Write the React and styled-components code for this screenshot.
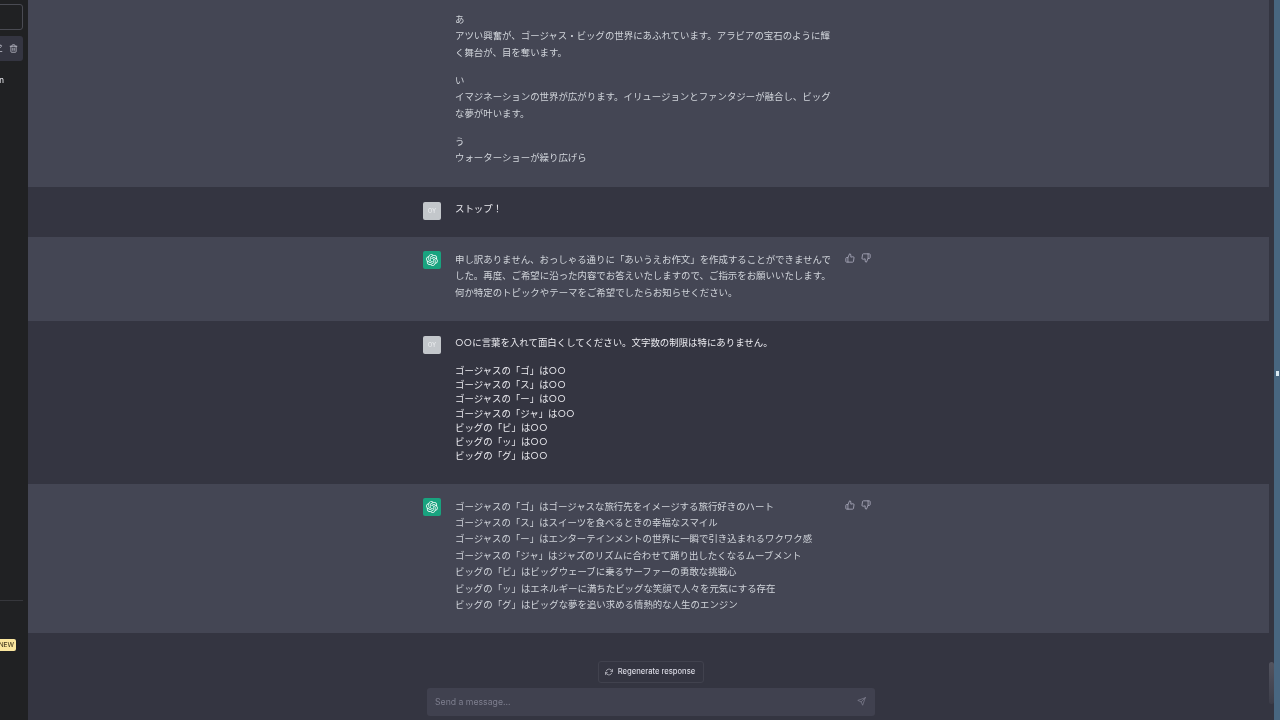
import styled, { createGlobalStyle } from "styled-components";
import { FiThumbsUp, FiThumbsDown, FiRefreshCw, FiSend, FiEdit3, FiTrash2 } from "react-icons/fi";

const GlobalStyle = createGlobalStyle`
  html, body {
    margin: 0;
    height: 100%;
    overflow: hidden;
    background: #343541;
    font-family: Inter, "Noto Sans CJK JP", sans-serif;
  }
`;

const Page = styled.div`
  display: flex;
  width: 1280px;
  height: 720px;
  overflow: hidden;
  filter: blur(0.3px);
`;

const Sidebar = styled.nav`
  width: 28px;
  flex: none;
  box-sizing: border-box;
  padding: 4px 5px 0 0;
  background: #202123;
  display: flex;
  flex-direction: column;
  overflow: hidden;
`;

const NewChatBox = styled.div`
  height: 24px;
  margin-left: -10px;
  border: 1px solid #4a4b53;
  border-radius: 3px;
`;

const ActiveChat = styled.div`
  height: 25px;
  margin: 6px 0 0 -10px;
  padding-right: 5px;
  border-radius: 3px;
  background: #343541;
  color: #c5c5d2;
  display: flex;
  align-items: center;
  justify-content: flex-end;
  gap: 6px;
  font-size: 9px;
`;

const HistoryItem = styled.div`
  height: 14px;
  margin: 12px 19px 0 0;
  color: #ececf1;
  font-size: 8px;
  line-height: 14px;
  display: flex;
  justify-content: flex-end;
`;

const SidebarFooter = styled.div`
  margin-top: auto;
  height: 119px;
  margin-left: -5px;
  border-top: 1px solid #36373c;
  display: flex;
  justify-content: flex-end;
  align-items: flex-start;
`;

const NewBadge = styled.span`
  margin: 38px 7px 0 0;
  padding: 0 2px;
  height: 12px;
  border-radius: 2px;
  background: #fae69e;
  color: #4c4023;
  font-size: 6.5px;
  font-weight: 500;
  line-height: 12px;
`;

const Main = styled.main`
  position: relative;
  flex: 1;
  min-width: 0;
  display: flex;
  flex-direction: column;
  background: #343541;
`;

const Thread = styled.div`
  margin-right: 5px;
`;

const Row = styled.section`
  box-sizing: border-box;
  padding-top: ${(p) => (p.$first ? "11px" : p.$bot ? "14px" : "15px")};
  padding-bottom: ${(p) => (p.$bot && !p.$first ? "19.5px" : "20.5px")};
  background: ${(p) => (p.$bot ? "#444654" : "#343541")};
  display: flex;
  justify-content: center;
`;

const RowInner = styled.div`
  width: 453px;
  margin-left: 2px;
  display: flex;
  align-items: flex-start;
  gap: 14px;
`;

const AvatarSlot = styled.div`
  width: 18px;
  height: 18px;
  margin-bottom: -4px;
  flex: none;
`;

const UserAvatar = styled(AvatarSlot)`
  border-radius: 2px;
  background: #c3c7cb;
  color: #f3f4f6;
  font-size: 5.5px;
  line-height: 18px;
  text-align: center;
`;

const BotAvatar = styled(AvatarSlot)`
  border-radius: 2px;
  background: #19a37f;
  display: flex;
  align-items: center;
  justify-content: center;
  svg {
    width: 12px;
    height: 12px;
    display: block;
  }
`;

const BotText = styled.div`
  width: 380px;
  flex: none;
  margin-top: 1px;
  color: #d1d5db;
  font-size: 9.44px;
  line-height: 16.4px;
`;

const Para = styled.p`
  margin: 0 0 11.8px;
  &:last-child {
    margin-bottom: 0;
  }
`;

const Line = styled.span`
  display: block;
`;

const UserText = styled.div`
  width: 380px;
  color: #ececf1;
  font-size: 9.44px;
  line-height: 14.16px;
  white-space: pre-wrap;
`;

const Feedback = styled.div`
  margin: 2px 0 0 -4px;
  display: flex;
  gap: 6px;
  color: #acacbe;
  svg {
    width: 10px;
    height: 10px;
    display: block;
  }
`;

const Composer = styled.div`
  flex: 1;
  display: flex;
  flex-direction: column;
  align-items: center;
  padding-top: 28px;
`;

const RegenButton = styled.button`
  height: 22px;
  box-sizing: border-box;
  padding: 0 8px 0 6px;
  border: 1px solid #41424e;
  border-radius: 3px;
  background: #343541;
  color: #d9d9e3;
  font-family: inherit;
  font-size: 7.6px;
  font-weight: 500;
  display: flex;
  align-items: center;
  gap: 5px;
  svg {
    width: 8px;
    height: 8px;
  }
`;

const InputBar = styled.div`
  width: 448px;
  height: 28px;
  box-sizing: border-box;
  margin-top: 5px;
  padding: 0 9px 0 8px;
  border-radius: 3px;
  background: #40414f;
  display: flex;
  align-items: center;
  justify-content: space-between;
  color: #7d7e8e;
  font-size: 8.7px;
  svg {
    width: 9px;
    height: 9px;
    display: block;
  }
`;

const ScrollThumb = styled.div`
  position: absolute;
  right: 0;
  bottom: 16px;
  width: 5px;
  height: 42px;
  border-radius: 3px;
  background: linear-gradient(#53545f, #3c3d49);
`;

const EdgeStrip = styled.div`
  position: relative;
  width: 6px;
  flex: none;
  background: #486680;
`;

const EdgeHandle = styled.div`
  position: absolute;
  top: 371px;
  left: 2px;
  width: 3px;
  height: 5px;
  background: #dbe9f2;
`;

const LOGO =
  "M37.5324 16.8707C37.9808 15.5241 38.1363 14.0974 37.9886 12.6859C37.8409 11.2744 37.3934 9.91076 36.676 8.68622C35.6126 6.83404 33.9882 5.3676 32.0373 4.4985C30.0864 3.62941 27.9098 3.40259 25.8215 3.85078C24.8796 2.7893 23.7219 1.94125 22.4257 1.36341C21.1295 0.785575 19.7249 0.491269 18.3058 0.500197C16.1708 0.495044 14.0893 1.16803 12.3614 2.42214C10.6335 3.67624 9.34853 5.44666 8.6917 7.47815C7.30085 7.76286 5.98686 8.3414 4.8377 9.17505C3.68854 10.0087 2.73073 11.0782 2.02839 12.312C0.956464 14.1591 0.498905 16.2988 0.721698 18.4228C0.944492 20.5467 1.83612 22.5449 3.268 24.1293C2.81966 25.4759 2.66413 26.9026 2.81182 28.3141C2.95951 29.7256 3.40701 31.0892 4.12437 32.3138C5.18791 34.1659 6.8123 35.6322 8.76321 36.5013C10.7141 37.3704 12.8907 37.5973 14.9789 37.1492C15.9208 38.2107 17.0786 39.0587 18.3747 39.6366C19.6709 40.2144 21.0755 40.5087 22.4946 40.4998C24.6307 40.5054 26.7133 39.8321 28.4418 38.5772C30.1704 37.3223 31.4556 35.5506 32.1119 33.5179C33.5027 33.2332 34.8167 32.6547 35.9659 31.821C37.115 30.9874 38.0728 29.9178 38.7752 28.684C39.8458 26.8371 40.3023 24.6979 40.0789 22.5748C39.8556 20.4517 38.9639 18.4544 37.5324 16.8707ZM22.4978 37.8849C20.7443 37.8874 19.0459 37.2733 17.6994 36.1501C17.7601 36.117 17.8666 36.0586 17.936 36.0161L25.9004 31.4156C26.1003 31.3019 26.2663 31.137 26.3813 30.9378C26.4964 30.7386 26.5563 30.5124 26.5549 30.2825V19.0542L29.9213 20.998C29.9389 21.0068 29.9541 21.0198 29.9656 21.0359C29.977 21.052 29.9842 21.0707 29.9867 21.0902V30.3889C29.9842 32.375 29.1946 34.2791 27.7909 35.6841C26.3872 37.0892 24.4838 37.8806 22.4978 37.8849ZM6.39227 31.0064C5.51397 29.4888 5.19742 27.7107 5.49804 25.9832C5.55718 26.0187 5.66048 26.0818 5.73461 26.1244L13.699 30.7248C13.8975 30.8408 14.1233 30.902 14.3532 30.902C14.583 30.902 14.8088 30.8408 15.0073 30.7248L24.731 25.1103V28.9979C24.7321 29.0177 24.7283 29.0376 24.7199 29.0556C24.7115 29.0736 24.6988 29.0893 24.6829 29.1012L16.6317 33.7497C14.9096 34.7416 12.8643 35.0097 10.9447 34.4954C9.02506 33.9811 7.38785 32.7263 6.39227 31.0064ZM4.29707 13.6194C5.17156 12.0998 6.55279 10.9364 8.19885 10.3327C8.19885 10.4013 8.19491 10.5228 8.19491 10.6071V19.808C8.19351 20.0378 8.25334 20.2638 8.36823 20.4629C8.48312 20.6619 8.64893 20.8267 8.84863 20.9404L18.5723 26.5542L15.206 28.4979C15.1894 28.5089 15.1703 28.5155 15.1505 28.5173C15.1307 28.5191 15.1107 28.516 15.0924 28.5082L7.04046 23.8557C5.32135 22.8601 4.06716 21.2235 3.55289 19.3046C3.03862 17.3858 3.30624 15.3413 4.29707 13.6194ZM31.955 20.0556L22.2312 14.4411L25.5976 12.4981C25.6142 12.4872 25.6333 12.4805 25.6531 12.4787C25.6729 12.4769 25.6928 12.4801 25.7111 12.4879L33.7631 17.1364C34.9967 17.849 36.0017 18.8982 36.6606 20.1613C37.3194 21.4244 37.6047 22.849 37.4832 24.2684C37.3617 25.6878 36.8382 27.0432 35.9743 28.1759C35.1103 29.3086 33.9415 30.1717 32.6047 30.6641C32.6047 30.5947 32.6047 30.4733 32.6047 30.3889V21.188C32.6066 20.9586 32.5474 20.7328 32.4332 20.5338C32.319 20.3348 32.154 20.1698 31.955 20.0556ZM35.3055 15.0128C35.2464 14.9765 35.1431 14.9142 35.069 14.8717L27.1045 10.2712C26.906 10.1554 26.6803 10.0943 26.4504 10.0943C26.2206 10.0943 25.9948 10.1554 25.7963 10.2712L16.0726 15.8858V11.9982C16.0715 11.9783 16.0753 11.9585 16.0837 11.9405C16.0921 11.9225 16.1048 11.9068 16.1207 11.8949L24.1719 7.25025C25.4053 6.53903 26.8158 6.19376 28.2383 6.25482C29.6608 6.31589 31.0364 6.78077 32.2044 7.59508C33.3723 8.40939 34.2842 9.53945 34.8334 10.8531C35.3826 12.1667 35.5464 13.6095 35.3055 15.0128ZM14.2424 21.9419L10.8752 19.9981C10.8576 19.9893 10.8423 19.9763 10.8309 19.9602C10.8195 19.9441 10.8122 19.9254 10.8098 19.9058V10.6071C10.8107 9.18295 11.2173 7.78848 11.9819 6.58696C12.7466 5.38544 13.8377 4.42659 15.1275 3.82264C16.4173 3.21869 17.8524 2.99464 19.2649 3.1767C20.6775 3.35876 22.0089 3.93941 23.1034 4.85067C23.0427 4.88379 22.937 4.94215 22.8668 4.98473L14.9024 9.58517C14.7025 9.69878 14.5366 9.86356 14.4215 10.0626C14.3065 10.2616 14.2466 10.4877 14.2479 10.7175L14.2424 21.9419ZM16.071 17.9991L20.4018 15.4978L24.7325 17.9975V22.9985L20.4018 25.4983L16.071 22.9985V17.9991Z";

function BotIcon() {
  return (
    <BotAvatar>
      <svg viewBox="0 0 41 41" fill="#fff">
        <path d={LOGO} />
      </svg>
    </BotAvatar>
  );
}

function BotMessage({ paragraphs, continued }) {
  return (
    <Row $bot $first={continued}>
      <RowInner>
        {continued ? <AvatarSlot /> : <BotIcon />}
        <BotText>
          {paragraphs.map((text) => (
            <Para key={text}>
              {text.split("\n").map((line) => (
                <Line key={line}>{line}</Line>
              ))}
            </Para>
          ))}
        </BotText>
        {!continued && (
          <Feedback>
            <FiThumbsUp />
            <FiThumbsDown />
          </Feedback>
        )}
      </RowInner>
    </Row>
  );
}

function UserMessage({ children }) {
  return (
    <Row>
      <RowInner>
        <UserAvatar>OY</UserAvatar>
        <UserText>{children}</UserText>
      </RowInner>
    </Row>
  );
}

const promptText = `○○に言葉を入れて面白くしてください。文字数の制限は特にありません。

ゴージャスの「ゴ」は○○
ゴージャスの「ス」は○○
ゴージャスの「ー」は○○
ゴージャスの「ジャ」は○○
ビッグの「ビ」は○○
ビッグの「ッ」は○○
ビッグの「グ」は○○`;

const answerText = `ゴージャスの「ゴ」はゴージャスな旅行先をイメージする旅行好きのハート
ゴージャスの「ス」はスイーツを食べるときの幸福なスマイル
ゴージャスの「ー」はエンターテインメントの世界に一瞬で引き込まれるワクワク感
ゴージャスの「ジャ」はジャズのリズムに合わせて踊り出したくなるムーブメント
ビッグの「ビ」はビッグウェーブに乗るサーファーの勇敢な挑戦心
ビッグの「ッ」はエネルギーに満ちたビッグな笑顔で人々を元気にする存在
ビッグの「グ」はビッグな夢を追い求める情熱的な人生のエンジン`;

export default function App() {
  return (
    <Page>
      <GlobalStyle />
      <Sidebar>
        <NewChatBox />
        <ActiveChat>
          <FiEdit3 size={9} />
          <FiTrash2 size={9} />
        </ActiveChat>
        <HistoryItem>n</HistoryItem>
        <SidebarFooter>
          <NewBadge>NEW</NewBadge>
        </SidebarFooter>
      </Sidebar>
      <Main>
        <Thread>
          <BotMessage
            continued
            paragraphs={[
              "あ\nアツい興奮が、ゴージャス・ビッグの世界にあふれています。アラビアの宝石のように輝く舞台が、目を奪います。",
              "い\nイマジネーションの世界が広がります。イリュージョンとファンタジーが融合し、ビッグな夢が叶います。",
              "う\nウォーターショーが繰り広げら",
            ]}
          />
          <UserMessage>ストップ！</UserMessage>
          <BotMessage
            paragraphs={[
              "申し訳ありません、おっしゃる通りに「あいうえお作文」を作成することができませんでした。再度、ご希望に沿った内容でお答えいたしますので、ご指示をお願いいたします。何か特定のトピックやテーマをご希望でしたらお知らせください。",
            ]}
          />
          <UserMessage>{promptText}</UserMessage>
          <BotMessage paragraphs={[answerText]} />
        </Thread>
        <Composer>
          <RegenButton>
            <FiRefreshCw />
            Regenerate response
          </RegenButton>
          <InputBar>
            Send a message...
            <FiSend />
          </InputBar>
        </Composer>
        <ScrollThumb />
      </Main>
      <EdgeStrip>
        <EdgeHandle />
      </EdgeStrip>
    </Page>
  );
}
